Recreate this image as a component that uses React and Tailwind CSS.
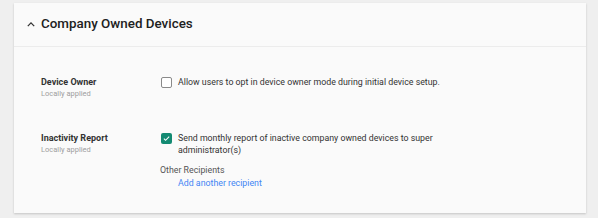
import React, { useState } from 'react';

function Checkbox({ checked, onChange }) {
  return (
    <button
      type="button"
      onClick={onChange}
      className={`mt-[1px] flex h-[11px] w-[11px] shrink-0 items-center justify-center rounded-[2px] ${
        checked ? 'bg-[#138a72]' : 'border-[1.5px] border-[#8a8a8a] bg-white'
      }`}
    >
      {checked && (
        <svg viewBox="0 0 12 12" className="h-[9px] w-[9px]">
          <path d="M2.5 6.2l2.3 2.3L9.6 3.6" fill="none" stroke="white" strokeWidth="1.4" />
        </svg>
      )}
    </button>
  );
}

function SettingRow({ label, children }) {
  return (
    <div className="flex">
      <div className="w-[120px] shrink-0">
        <div className="text-[9px] font-bold leading-[12px] text-[#333]">{label}</div>
        <div className="text-[7.5px] leading-[11px] text-[#9e9e9e]">Locally applied</div>
      </div>
      <div className="w-[290px]">{children}</div>
    </div>
  );
}

export default function App() {
  const [owner, setOwner] = useState(false);
  const [report, setReport] = useState(true);

  return (
    <div className="h-[218px] w-[598px] bg-[#efefef] pl-[14px] pr-[12px] pt-[3px] font-['Roboto',sans-serif]">
      <div className="h-[210px] bg-[#fafafa] shadow-[0_1px_2px_rgba(0,0,0,0.18)]">
        <div className="flex h-[44px] items-center gap-[6px] border-b border-[#ececec] pl-[13px]">
          <svg viewBox="0 0 10 6" className="h-[5px] w-[8px]">
            <path d="M1 5l4-4 4 4" fill="none" stroke="#333" strokeWidth="1.6" />
          </svg>
          <span className="text-[13.4px] font-medium text-[#212121]">Company Owned Devices</span>
        </div>
        <div className="pl-[27px] pt-[29px]">
          <SettingRow label="Device Owner">
            <label className="flex gap-[6px]">
              <Checkbox checked={owner} onChange={() => setOwner(!owner)} />
              <span className="text-[8.8px] leading-[12px] text-[#333]">
                Allow users to opt in device owner mode during initial device setup.
              </span>
            </label>
          </SettingRow>
          <div className="h-[33px]" />
          <SettingRow label="Inactivity Report">
            <label className="flex gap-[6px]">
              <Checkbox checked={report} onChange={() => setReport(!report)} />
              <span className="text-[8.8px] leading-[12px] text-[#333]">
                Send monthly report of inactive company owned devices to super administrator(s)
              </span>
            </label>
            <div className="mt-[8px] -ml-[1px] text-[8.8px] leading-[12px] text-[#555]">Other Recipients</div>
            <div className="ml-[17px] mt-[1px] text-[8.8px] leading-[12px] text-[#4285f4]">Add another recipient</div>
          </SettingRow>
        </div>
      </div>
    </div>
  );
}
